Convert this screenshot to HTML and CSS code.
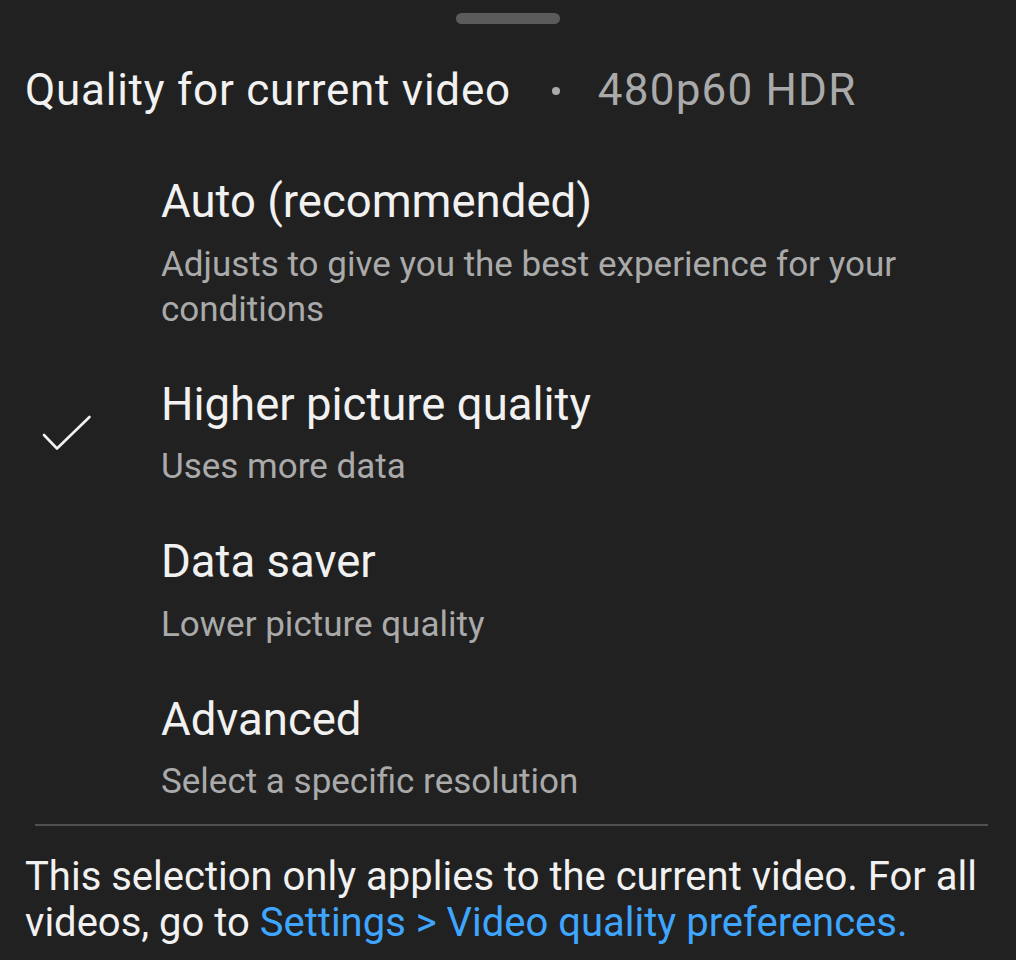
FILE: index.html
```html
<!DOCTYPE html>
<html>
<head>
<meta charset="utf-8">
<link rel="stylesheet" href="styles.css">
</head>
<body>
<div class="sheet">
  <div class="handle-row"><div class="handle"></div></div>
  <div class="header">
    <span class="header-title">Quality for current video</span>
    <span class="dot"></span>
    <span class="header-value">480p60 HDR</span>
  </div>
  <div class="options">
    <div class="option">
      <div class="check"></div>
      <div class="text">
        <div class="title">Auto (recommended)</div>
        <div class="sub">Adjusts to give you the best experience for your conditions</div>
      </div>
    </div>
    <div class="option">
      <div class="check">
        <svg class="check-icon" width="50" height="36" viewBox="0 0 50 36"><path d="M2 20 L15 33.5 L47.5 2" fill="none" stroke="#f1f1f1" stroke-width="2.6" stroke-linecap="round" stroke-linejoin="round"/></svg>
      </div>
      <div class="text">
        <div class="title">Higher picture quality</div>
        <div class="sub">Uses more data</div>
      </div>
    </div>
    <div class="option">
      <div class="check"></div>
      <div class="text">
        <div class="title">Data saver</div>
        <div class="sub">Lower picture quality</div>
      </div>
    </div>
    <div class="option last">
      <div class="check"></div>
      <div class="text">
        <div class="title">Advanced</div>
        <div class="sub">Select a specific resolution</div>
      </div>
    </div>
  </div>
  <div class="divider"></div>
  <p class="footer">This selection only applies to the current video. For all videos, go to <span class="link">Settings &gt; Video quality preferences.</span></p>
</div>
</body>
</html>
```
FILE: styles.css
```css
html, body {
  margin: 0;
  padding: 0;
  background: #212121;
}
body {
  font-family: Roboto, "Noto Sans", sans-serif;
  color: #f1f1f1;
  width: 1016px;
  height: 960px;
  overflow: hidden;
}
.sheet {
  display: flex;
  flex-direction: column;
}
.handle-row {
  display: flex;
  justify-content: center;
  padding-top: 13px;
}
.handle {
  width: 104px;
  height: 11px;
  border-radius: 6px;
  background: #5b5b5b;
}
.header {
  display: flex;
  align-items: center;
  padding: 0 25px;
  margin-top: 39px;
  font-size: 44px;
  line-height: 54px;
  letter-spacing: 0.75px;
}
.header-title { color: #f1f1f1; }
.dot {
  width: 8px;
  height: 8px;
  border-radius: 50%;
  background: #aaaaaa;
  margin: 2px 38px 0 41px;
  flex: none;
}
.header-value { color: #aaaaaa; letter-spacing: 1.2px; }
.options {
  display: flex;
  flex-direction: column;
  margin-top: 58px;
}
.option {
  display: flex;
  padding: 0 40px 0 0;
}
.check {
  width: 161px;
  flex: none;
  padding: 37px 0 0 42px;
  box-sizing: border-box;
}
.check-icon { display: block; }
.text { flex: 1; }
.title {
  font-size: 45.5px;
  line-height: 54px;
  color: #f1f1f1;
}
.sub {
  font-size: 35px;
  line-height: 45px;
  color: #aaaaaa;
  margin-top: 12.5px;
  margin-bottom: 46px;
}
.last .sub { margin-bottom: 0; }
.divider {
  height: 2px;
  background: #505050;
  margin: 19.5px 28px 0 35px;
}
.footer {
  margin: 28px 25px 0;
  font-size: 40px;
  line-height: 46px;
  color: #f1f1f1;
}
.link { color: #3ea6ff; }
```
